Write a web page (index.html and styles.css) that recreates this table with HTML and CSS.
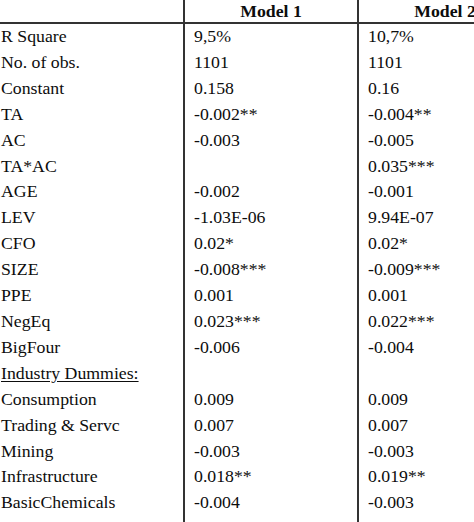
FILE: index.html
```html
<!DOCTYPE html>
<html lang="en">
<head>
<meta charset="utf-8">
<title>Regression results</title>
<link rel="stylesheet" href="styles.css">
</head>
<body>
<div class="frame">
<table class="results">
  <thead>
    <tr>
      <th class="label"></th>
      <th class="model">Model 1</th>
      <th class="model">Model 2</th>
    </tr>
  </thead>
  <tbody>
    <tr><td class="label">R Square</td><td class="val">9,5%</td><td class="val">10,7%</td></tr>
    <tr><td class="label">No. of obs.</td><td class="val">1101</td><td class="val">1101</td></tr>
    <tr><td class="label">Constant</td><td class="val">0.158</td><td class="val">0.16</td></tr>
    <tr><td class="label">TA</td><td class="val">-0.002**</td><td class="val">-0.004**</td></tr>
    <tr><td class="label">AC</td><td class="val">-0.003</td><td class="val">-0.005</td></tr>
    <tr><td class="label">TA*AC</td><td class="val"></td><td class="val">0.035***</td></tr>
    <tr><td class="label">AGE</td><td class="val">-0.002</td><td class="val">-0.001</td></tr>
    <tr><td class="label">LEV</td><td class="val">-1.03E-06</td><td class="val">9.94E-07</td></tr>
    <tr><td class="label">CFO</td><td class="val">0.02*</td><td class="val">0.02*</td></tr>
    <tr><td class="label">SIZE</td><td class="val">-0.008***</td><td class="val">-0.009***</td></tr>
    <tr><td class="label">PPE</td><td class="val">0.001</td><td class="val">0.001</td></tr>
    <tr><td class="label">NegEq</td><td class="val">0.023***</td><td class="val">0.022***</td></tr>
    <tr><td class="label">BigFour</td><td class="val">-0.006</td><td class="val">-0.004</td></tr>
    <tr><td class="label"><span class="group">Industry Dummies:</span></td><td class="val"></td><td class="val"></td></tr>
    <tr><td class="label">Consumption</td><td class="val">0.009</td><td class="val">0.009</td></tr>
    <tr><td class="label">Trading &amp; Servc</td><td class="val">0.007</td><td class="val">0.007</td></tr>
    <tr><td class="label">Mining</td><td class="val">-0.003</td><td class="val">-0.003</td></tr>
    <tr><td class="label">Infrastructure</td><td class="val">0.018**</td><td class="val">0.019**</td></tr>
    <tr class="last"><td class="label">BasicChemicals</td><td class="val">-0.004</td><td class="val">-0.003</td></tr>
  </tbody>
</table>
</div>
</body>
</html>
```
FILE: styles.css
```css
html, body {
  margin: 0;
  padding: 0;
  background: #ffffff;
  overflow: hidden;
}

.frame {
  width: 474px;
  height: 522px;
  overflow: hidden;
}

.results {
  border-collapse: collapse;
  table-layout: fixed;
  width: 530px;
  font-family: "Liberation Serif", "Times New Roman", serif;
  font-size: 17.75px;
  color: #0d0d0d;
}

.results th,
.results td {
  padding: 0;
  white-space: nowrap;
}

.results th.label,
.results td.label {
  width: 182px;
  padding-left: 1px;
  text-align: left;
}

.results th.model,
.results td.val {
  width: 172px;
  border-left: 2px solid #333333;
}

.results thead th {
  height: 22px;
  line-height: 22px;
  font-weight: bold;
  border-bottom: 2px solid #333333;
  vertical-align: middle;
}

.results th.model {
  text-align: center;
}

.results tbody td {
  height: 25.9px;
  line-height: 25.9px;
  vertical-align: top;
}

.results td.val {
  padding-left: 9px;
  text-align: left;
}

.results tr.last td {
  height: 34px;
}

.group {
  text-decoration: underline;
  text-underline-offset: 2px;
}
```
